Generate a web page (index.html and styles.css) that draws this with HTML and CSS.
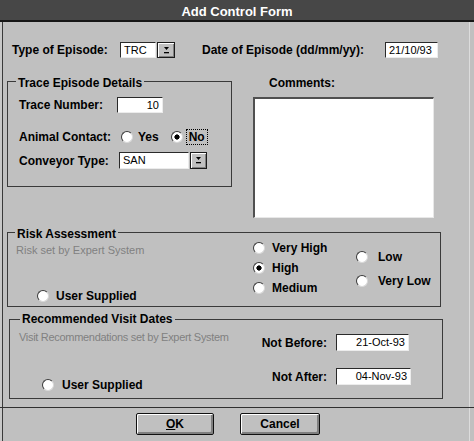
FILE: index.html
```html
<!DOCTYPE html>
<html lang="en">
<head>
<meta charset="utf-8">
<title>Add Control Form</title>
<link rel="stylesheet" href="styles.css">
</head>
<body>
<div class="window">
  <div class="titlebar">Add Control Form</div>

  <div class="row-top">
    <span class="lbl lbl-type">Type of Episode:</span>
    <div class="combo">
      <div class="field field-trc">TRC</div>
      <div class="dropbtn"><svg width="7" height="7" viewBox="0 0 7 7"><polygon points="1,0 6,0 3.5,3" fill="#000"/><rect x="1" y="5" width="5" height="1.3" fill="#000"/></svg></div>
    </div>
    <span class="lbl lbl-date">Date of Episode (dd/mm/yy):</span>
    <div class="field field-date">21/10/93</div>
  </div>

  <div class="row-mid">
    <fieldset class="group group-trace">
      <legend class="glegend">Trace Episode Details</legend>
      <div class="trow trow-num">
        <span class="lbl tlbl">Trace Number:</span>
        <div class="field field-num">10</div>
      </div>
      <div class="trow trow-animal">
        <span class="lbl tlbl">Animal Contact:</span>
        <div class="opt opt-yes"><span class="radio"></span><span class="lbl">Yes</span></div>
        <div class="opt opt-no"><span class="radio on"></span><span class="lbl focus">No</span></div>
      </div>
      <div class="trow trow-conv">
        <span class="lbl tlbl">Conveyor Type:</span>
        <div class="combo combo-conv">
          <div class="field field-conv">SAN</div>
          <div class="dropbtn"><svg width="7" height="7" viewBox="0 0 7 7"><polygon points="1,0 6,0 3.5,3" fill="#000"/><rect x="1" y="5" width="5" height="1.3" fill="#000"/></svg></div>
        </div>
      </div>
    </fieldset>

    <div class="comments">
      <div class="lbl comments-lbl">Comments:</div>
      <div class="textarea"></div>
    </div>
  </div>

  <fieldset class="group group-risk">
    <legend class="glegend">Risk Assessment</legend>
    <div class="risk-body">
      <div class="side-left risk-left">
        <div class="hint">Risk set by Expert System</div>
        <div class="opt opt-user"><span class="radio"></span><span class="lbl">User Supplied</span></div>
      </div>
      <div class="risk-col1">
        <div class="opt opt-c1"><span class="radio"></span><span class="lbl">Very High</span></div>
        <div class="opt opt-c1"><span class="radio on"></span><span class="lbl">High</span></div>
        <div class="opt opt-c1"><span class="radio"></span><span class="lbl">Medium</span></div>
      </div>
      <div class="risk-col2">
        <div class="opt opt-c2"><span class="radio"></span><span class="lbl">Low</span></div>
        <div class="opt opt-c2"><span class="radio"></span><span class="lbl">Very Low</span></div>
      </div>
    </div>
  </fieldset>

  <fieldset class="group group-visit">
    <legend class="glegend">Recommended Visit Dates</legend>
    <div class="visit-body">
      <div class="side-left visit-left">
        <div class="hint hint-visit">Visit Recommendations set by Expert System</div>
        <div class="opt opt-user2"><span class="radio"></span><span class="lbl">User Supplied</span></div>
      </div>
      <div class="visit-right">
        <div class="vrow">
          <span class="lbl vlbl">Not Before:</span>
          <div class="field field-vdate">21-Oct-93</div>
        </div>
        <div class="vrow">
          <span class="lbl vlbl">Not After:</span>
          <div class="field field-vdate field-vdate2">04-Nov-93</div>
        </div>
      </div>
    </div>
  </fieldset>

  <div class="sep"></div>

  <div class="buttons">
    <div class="btn btn-ok"><span class="ul">O</span>K</div>
    <div class="btn btn-cancel">Cancel</div>
  </div>
</div>
</body>
</html>
```

FILE: styles.css
```css
* { box-sizing: border-box; }

html, body {
  margin: 0;
  padding: 0;
}

body {
  width: 474px;
  height: 441px;
  overflow: hidden;
  background: #c0c0c0;
  font-family: "Liberation Sans", Arial, sans-serif;
  font-size: 12px;
  color: #000;
}

.window {
  width: 474px;
  height: 441px;
  background: #c0c0c0;
  box-shadow: inset 2px 0 0 #c8c8c8, inset 3px 0 0 #3a3a3a, inset -4px 0 0 #c0c0c0, inset -5px 0 0 #dcdcdc;
  display: flex;
  flex-direction: column;
}

.titlebar {
  height: 22px;
  flex: none;
  background: #474747;
  border-bottom: 2px solid #161616;
  color: #fff;
  font-weight: bold;
  font-size: 13px;
  line-height: 16px;
  padding-top: 4px;
  text-align: center;
}

.lbl {
  font-weight: bold;
  white-space: nowrap;
  line-height: 14px;
}

/* text fields */
.field {
  background: #fff;
  height: 16px;
  border: 1px solid;
  border-color: #2a2a2a #ececec #ececec #2a2a2a;
  font-size: 11px;
  line-height: 14px;
  padding: 0 3px;
  overflow: hidden;
  white-space: nowrap;
}

.combo {
  display: flex;
  gap: 1px;
}

.dropbtn {
  width: 18px;
  height: 16px;
  background: #c0c0c0;
  border: 1px solid #1a1a1a;
  box-shadow: inset 1px 1px 0 #fff, inset -1px -1px 0 #808080;
  display: flex;
  align-items: center;
  justify-content: center;
}

/* top row */
.row-top {
  display: flex;
  align-items: center;
  height: 16px;
  margin-top: 20px;
  padding-left: 12px;
  flex: none;
}

.lbl-type { width: 108px; }
.field-trc { width: 36px; }
.lbl-date { width: 183px; margin-left: 27px; }
.field-date { width: 53px; padding-left: 3px; }

/* middle row */
.row-mid {
  display: flex;
  align-items: flex-start;
  margin-top: 14px;
  flex: none;
}

.group {
  border: 1px solid #3a3a3a;
  min-width: 0;
  flex: none;
}

.glegend {
  font-weight: bold;
  font-size: 12px;
  line-height: 14px;
  padding: 4px 2px 0;
  white-space: nowrap;
}

.group-trace {
  margin: 0 0 0 7px;
  width: 225px;
  padding: 7px 0 17px 11px;
}

.group-trace .glegend { margin-left: -3px; }

.trow {
  display: flex;
  align-items: center;
  height: 16px;
}

.trow-animal { margin-top: 16px; }
.trow-conv { margin-top: 7px; height: 17px; }

.tlbl { width: 98px; }

.field-num { width: 46px; text-align: right; }

.opt {
  display: flex;
  align-items: center;
  gap: 5px;
}

.trow-animal .opt-yes { margin-left: 4px; }
.trow-animal .opt-no { margin-left: 12px; gap: 3px; }

.focus {
  border: 1px dotted #000;
  padding: 0 2px;
  line-height: 14px;
}

.radio {
  width: 12px;
  height: 12px;
  flex: none;
  border-radius: 50%;
  border: 1px solid;
  border-color: #3a3a3a #d8d8d8 #d8d8d8 #3a3a3a;
  background: #fff;
}

.radio.on {
  background: radial-gradient(circle, #000 0 2.3px, #fff 2.9px);
}

.combo-conv { margin-left: 2px; }
.combo-conv .field, .combo-conv .dropbtn { height: 17px; }
.field-conv { width: 70px; }
.combo-conv .dropbtn { width: 17px; }

.comments {
  margin-left: 21px;
  padding-top: 4px;
}

.comments-lbl { padding-left: 16px; }

.textarea {
  margin-top: 7px;
  width: 181px;
  height: 121px;
  background: #fff;
  border-style: solid;
  border-width: 2px 1px 1px 2px;
  border-color: #505050 #e8e8e8 #e8e8e8 #505050;
}

/* risk assessment */
.group-risk {
  margin: 5px 0 0 7px;
  width: 434px;
  padding: 0 0 3px 8px;
}

.group-risk .glegend { margin-left: -1px; }

.risk-body {
  display: flex;
  height: 62px;
}

.side-left {
  display: flex;
  flex-direction: column;
  justify-content: space-between;
}

.risk-left { width: 237px; }

.hint {
  color: #808080;
  font-size: 11px;
  line-height: 13px;
  white-space: nowrap;
}

.hint-visit { letter-spacing: -0.3px; }

.risk-left .hint { margin-top: 3px; }

.opt-user { padding-left: 21px; gap: 7px; }

.risk-col1 {
  width: 103px;
  display: flex;
  flex-direction: column;
  gap: 6px;
}

.opt-c1 { gap: 7px; }

.risk-col2 {
  display: flex;
  flex-direction: column;
  gap: 10px;
  padding-top: 9px;
}

.opt-c2 { gap: 10px; }

/* recommended visit dates */
.group-visit {
  margin: 5px 0 0 9px;
  width: 434px;
  padding: 4px 0 6px 9px;
}

.group-visit .glegend { margin-left: 1px; padding-top: 0; }

.visit-body {
  display: flex;
  height: 62px;
}

.visit-left { width: 234px; }
.visit-left .hint { margin-top: 1px; }

.opt-user2 { padding-left: 23px; gap: 8px; }

.visit-right {
  display: flex;
  flex-direction: column;
  gap: 17px;
  padding-top: 4px;
}

.vrow {
  display: flex;
  align-items: center;
  gap: 9px;
  height: 17px;
}

.vlbl { width: 74px; text-align: right; }

.field-vdate {
  width: 73px;
  height: 17px;
  text-align: right;
  line-height: 15px;
}

.field-vdate2 { width: 75px; }

.sep {
  margin-top: 8px;
  height: 1px;
  background: #303030;
  flex: none;
}

.buttons {
  display: flex;
  gap: 26px;
  padding-left: 136px;
  margin-top: 5px;
  flex: none;
}

.btn {
  height: 22px;
  border: 1px solid #111;
  border-radius: 2px;
  box-shadow: inset 1px 1px 0 #fff, inset -2px -2px 0 #808080;
  font-weight: bold;
  font-size: 12px;
  line-height: 20px;
  text-align: center;
  background: #c0c0c0;
}

.btn-ok { width: 78px; }
.btn-cancel { width: 80px; }

.ul { text-decoration: underline; }
```
